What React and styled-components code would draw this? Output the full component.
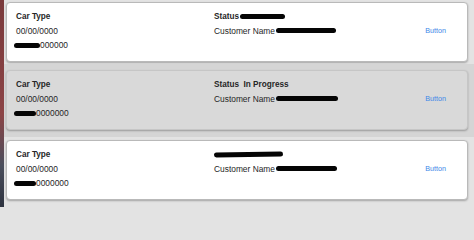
import React from "react";
import styled, { createGlobalStyle } from "styled-components";

const GlobalStyle = createGlobalStyle`
    html, body {
        margin: 0;
        padding: 0;
        background: #e3e3e3;
        font-family: "Liberation Sans", Arial, sans-serif;
    }
`;

const Page = styled.div`
    display: flex;
    width: 474px;
    height: 207px;
    overflow: hidden;
`;

const Strip = styled.div`
    width: 4px;
    flex-shrink: 0;
    background: linear-gradient(180deg, #7a3a3c 0%, #8c4446 55%, #4a4e5c 80%, #2e3340 100%);
`;

const List = styled.div`
    flex: 1;
    display: flex;
    flex-direction: column;
    padding-top: 2px;
`;

const Row = styled.div`
    padding: ${(p) => (p.selected ? "6px 4px 7px 2px" : "0 4px 2px 2px")};
    background: ${(p) => (p.selected ? "#d5d5d5" : "transparent")};
    &:last-child {
        padding-top: 3px;
    }
`;

const Card = styled.div`
    display: grid;
    grid-template-columns: 198px 1fr auto;
    grid-template-rows: repeat(3, 14.5px);
    align-items: center;
    height: 60px;
    box-sizing: border-box;
    padding: 6px 21px 10px 9px;
    margin-right: 2px;
    background: ${(p) => (p.selected ? "#d9d9d9" : "#ffffff")};
    border: 1px solid ${(p) => (p.selected ? "#c6c6c6" : "#b9b9b9")};
    border-radius: 4px;
    box-shadow: 0 1px 2px rgba(0, 0, 0, 0.28);
    color: #262626;
`;

const Label = styled.div`
    font-size: 8.2px;
    font-weight: 700;
    white-space: nowrap;
    display: flex;
    align-items: center;
`;

const Text = styled.div`
    font-size: 8.4px;
    white-space: nowrap;
    display: flex;
    align-items: center;
`;

const Redact = styled.span`
    display: inline-block;
    width: ${(p) => p.w}px;
    height: ${(p) => p.h || 5}px;
    margin-left: ${(p) => p.ml || 0}px;
    background: #050505;
    border-radius: 3px;
    transform: rotate(${(p) => p.tilt || 0}deg);
`;

const LinkButton = styled.button`
    grid-column: 3;
    grid-row: 2;
    border: none;
    background: none;
    padding: 0;
    font-family: inherit;
    font-size: 7.2px;
    color: #3c87e8;
    cursor: pointer;
`;

const rows = [
    {
        serialMask: 26,
        serial: "000000",
        status: <><span>Status</span><Redact w={45} h={5} ml={1} /></>,
        customerMask: 60,
    },
    {
        selected: true,
        serialMask: 22,
        serial: "0000000",
        status: <span>Status&nbsp; In Progress</span>,
        customerMask: 62,
    },
    {
        serialMask: 22,
        serial: "0000000",
        status: <Redact w={69} h={5} tilt={-1} />,
        customerMask: 61,
    },
];

function OrderCard({ item }) {
    return (
        <Row selected={item.selected}>
            <Card selected={item.selected}>
                <Label>Car Type</Label>
                <Label>{item.status}</Label>
                <span />
                <Text>00/00/0000</Text>
                <Text>
                    Customer Name
                    <Redact w={item.customerMask} ml={1} />
                </Text>
                <LinkButton>Button</LinkButton>
                <Text>
                    <Redact w={item.serialMask} h={5} ml={-2} />
                    {item.serial}
                </Text>
            </Card>
        </Row>
    );
}

export default function App() {
    return (
        <>
            <GlobalStyle />
            <Page>
                <Strip />
                <List>
                    {rows.map((item, i) => (
                        <OrderCard key={i} item={item} />
                    ))}
                </List>
            </Page>
        </>
    );
}
